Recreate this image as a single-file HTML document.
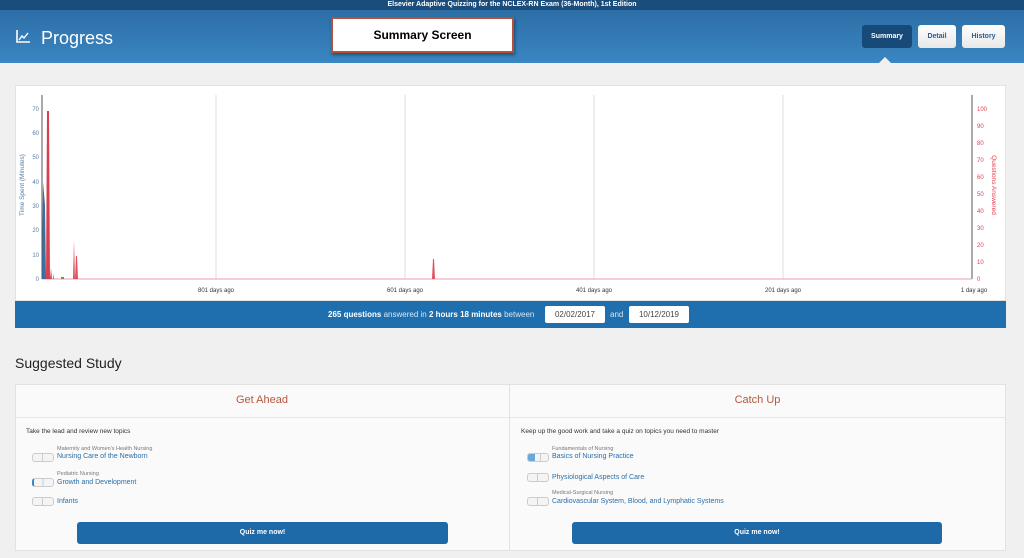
<!DOCTYPE html>
<html><head><meta charset="utf-8"><style>
*{margin:0;padding:0;box-sizing:border-box}
body{width:1024px;height:558px;overflow:hidden;background:#f0f0f0;font-family:"Liberation Sans",sans-serif;position:relative}
.abs{position:absolute}
.top{left:0;top:0;width:1024px;height:10px;background:#1b4d7c;color:#fff;font-size:7px;font-weight:bold;text-align:center;line-height:9px}
.hdr{left:0;top:10px;width:1024px;height:53px;background:linear-gradient(#2d6ea6,#3a86c2)}
.btn{top:25px;height:23px;border-radius:3px;font-size:7px;font-weight:bold;text-align:center;line-height:23px}
.card{background:#fff;border:1px solid #e2e2e2}
.lbl{font-size:6.5px;color:#333}
.toggle{width:22px;height:9px;border:1px solid #ccc;border-radius:3px;background:linear-gradient(90deg,#f4f4f4 45%,#ccc 45%,#ccc 50%,#f4f4f4 50%)}
.sm{font-size:5.5px;color:#777}
.lk{font-size:7px;color:#2b6ea8}
.qbtn{height:22px;background:#1e6aa9;border-radius:3px;color:#fff;font-size:7px;font-weight:bold;text-align:center;line-height:22px}
</style></head><body>
<div class="abs top">Elsevier Adaptive Quizzing for the NCLEX-RN Exam (36-Month), 1st Edition</div>
<div class="abs hdr"></div>
<svg class="abs" style="left:16px;top:30px" width="14" height="13" viewBox="0 0 14 13"><path d="M1 0V12H14" stroke="#fff" stroke-width="1.6" fill="none"/><path d="M3 10L6 6L8 8L12 3" stroke="#fff" stroke-width="1.4" fill="none"/></svg>
<div class="abs" style="left:41px;top:28px;color:#fff;font-size:18px">Progress</div>
<div class="abs" style="left:331px;top:17px;width:183px;height:36px;background:#fff;border:2px solid #b4513d;box-shadow:1px 2px 3px rgba(0,0,0,.4);font-size:12px;font-weight:bold;text-align:center;line-height:32px">Summary Screen</div>
<div class="abs btn" style="left:862px;width:50px;background:#174a78;color:#fff">Summary</div>
<div class="abs btn" style="left:918px;width:38px;background:linear-gradient(#fff,#e8e8e8);color:#2a5d8f">Detail</div>
<div class="abs btn" style="left:962px;width:43px;background:linear-gradient(#fff,#e8e8e8);color:#2a5d8f">History</div>
<div class="abs" style="left:879px;top:57px;width:0;height:0;border-left:6px solid transparent;border-right:6px solid transparent;border-bottom:6px solid #f0f0f0"></div>
<div class="abs card" style="left:15px;top:85px;width:991px;height:216px"></div>
<svg class="abs" style="left:15px;top:85px" width="991" height="216">
<g stroke="#ddd" stroke-width="1"><line x1="201" y1="10" x2="201" y2="194"/><line x1="390" y1="10" x2="390" y2="194"/><line x1="579" y1="10" x2="579" y2="194"/><line x1="768" y1="10" x2="768" y2="194"/></g>
<line x1="27" y1="10" x2="27" y2="194" stroke="#555"/><line x1="957" y1="10" x2="957" y2="194" stroke="#555"/>
<line x1="27" y1="194" x2="957" y2="194" stroke="#e8a0a8"/>
<g font-size="6" fill="#5a7fa5" text-anchor="end" font-family="Liberation Sans">
<text x="24" y="196">0</text><text x="24" y="172">10</text><text x="24" y="147">20</text><text x="24" y="123">30</text><text x="24" y="99">40</text><text x="24" y="74">50</text><text x="24" y="50">60</text><text x="24" y="26">70</text></g>
<g font-size="6" fill="#e04050" font-family="Liberation Sans">
<text x="962" y="196">0</text><text x="962" y="179">10</text><text x="962" y="162">20</text><text x="962" y="145">30</text><text x="962" y="128">40</text><text x="962" y="111">50</text><text x="962" y="94">60</text><text x="962" y="77">70</text><text x="962" y="60">80</text><text x="962" y="43">90</text><text x="962" y="26">100</text></g>
<text x="9" y="100" font-size="6.5" fill="#5a7fa5" transform="rotate(-90 9 100)" text-anchor="middle" font-family="Liberation Sans">Time Spent (Minutes)</text>
<text x="977" y="100" font-size="6.5" fill="#e04050" transform="rotate(90 977 100)" text-anchor="middle" font-family="Liberation Sans">Questions Answered</text>
<path d="M27 194L28 97L30 120L31 194Z" fill="#3a6fa0"/>
<path d="M31 194L32 26L34 26L35 194L36 183L37 194L38 194L38 188L39 194Z" fill="#d9404f"/>
<path d="M58 194L59 155L60 194L61 171L62 171L63 194Z" fill="#e05060"/>
<path d="M417 194L418 174L419 174L420 194Z" fill="#e05060"/>
<rect x="46" y="192" width="3" height="2" fill="#884"/>
<g font-size="6" fill="#333" text-anchor="middle" font-family="Liberation Sans"><text x="201" y="207">801 days ago</text><text x="390" y="207">601 days ago</text><text x="579" y="207">401 days ago</text><text x="768" y="207">201 days ago</text><text x="959" y="207">1 day ago</text></g>
</svg>
<div class="abs" style="left:15px;top:301px;width:991px;height:27px;background:#1f6fae;color:#d8e6f3;font-size:8px;line-height:27px;padding-left:313px"><b style="color:#fff">265 questions</b> answered in <b style="color:#fff">2 hours 18 minutes</b> between</div>
<div class="abs" style="left:545px;top:306px;width:60px;height:17px;background:#fff;border-radius:2px;font-size:8px;color:#444;text-align:center;line-height:17px">02/02/2017</div>
<div class="abs" style="left:610px;top:306px;color:#d8e6f3;font-size:8px;line-height:17px">and</div>
<div class="abs" style="left:629px;top:306px;width:60px;height:17px;background:#fff;border-radius:2px;font-size:8px;color:#444;text-align:center;line-height:17px">10/12/2019</div>
<div class="abs" style="left:15px;top:355px;font-size:14px;color:#222">Suggested Study</div>
<div class="abs card" style="left:15px;top:384px;width:991px;height:167px;background:#fafafa"></div>
<div class="abs" style="left:509px;top:384px;width:1px;height:167px;background:#e2e2e2"></div>
<div class="abs" style="left:16px;top:417px;width:989px;height:1px;background:#e6e6e6"></div>
<div class="abs" style="left:15px;top:394px;width:494px;text-align:center;font-size:11px;color:#b5573a">Get Ahead</div>
<div class="abs" style="left:509px;top:394px;width:497px;text-align:center;font-size:11px;color:#b5573a">Catch Up</div>
<div class="abs lbl" style="left:26px;top:428px">Take the lead and review new topics</div>
<div class="abs sm" style="left:57px;top:446px">Maternity and Women's Health Nursing</div>
<div class="abs toggle" style="left:32px;top:453px"></div><div class="abs lk" style="left:57px;top:453px">Nursing Care of the Newborn</div>
<div class="abs sm" style="left:57px;top:471px">Pediatric Nursing</div>
<div class="abs toggle" style="left:32px;top:478px;border-left:2px solid #3a86c2"></div><div class="abs lk" style="left:57px;top:479px">Growth and Development</div>
<div class="abs toggle" style="left:32px;top:497px"></div><div class="abs lk" style="left:57px;top:498px">Infants</div>
<div class="abs qbtn" style="left:77px;top:522px;width:371px">Quiz me now!</div>
<div class="abs lbl" style="left:521px;top:428px">Keep up the good work and take a quiz on topics you need to master</div>
<div class="abs sm" style="left:552px;top:446px">Fundamentals of Nursing</div>
<div class="abs toggle" style="left:527px;top:453px;background:linear-gradient(90deg,#6aa8dc 35%,#f4f4f4 35%,#f4f4f4 60%,#ccc 60%,#ccc 64%,#f4f4f4 64%)"></div><div class="abs lk" style="left:552px;top:453px">Basics of Nursing Practice</div>
<div class="abs toggle" style="left:527px;top:473px"></div><div class="abs lk" style="left:552px;top:474px">Physiological Aspects of Care</div>
<div class="abs sm" style="left:552px;top:490px">Medical-Surgical Nursing</div>
<div class="abs toggle" style="left:527px;top:497px"></div><div class="abs lk" style="left:552px;top:498px">Cardiovascular System, Blood, and Lymphatic Systems</div>
<div class="abs qbtn" style="left:572px;top:522px;width:370px">Quiz me now!</div>
</body></html>
